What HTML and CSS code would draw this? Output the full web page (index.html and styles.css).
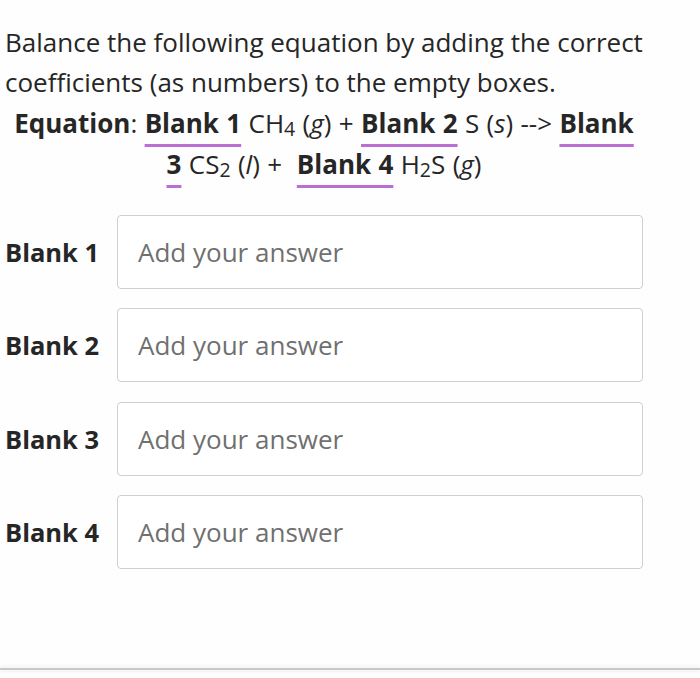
FILE: index.html
```html
<!DOCTYPE html>
<html>
<head>
<meta charset="utf-8">
<link rel="stylesheet" href="styles.css">
</head>
<body>
<div class="page">
  <div class="question">
    <p class="intro">Balance the following equation by adding the correct coefficients (as numbers) to the empty boxes.</p>
    <p class="equation"><b>Equation</b>: <span class="blank">Blank 1</span> CH<sub>4</sub> (<i>g</i>) + <span class="blank">Blank 2</span> S (<i>s</i>) --&gt; <span class="blank">Blank</span> <span class="blank">3</span> CS<sub>2</sub> (<i>l</i>) +&nbsp; <span class="blank">Blank 4</span> H<sub>2</sub>S (<i>g</i>)</p>
  </div>
  <div class="answers">
    <div class="row"><span class="label">Blank 1</span><input class="field" type="text" placeholder="Add your answer"></div>
    <div class="row"><span class="label">Blank 2</span><input class="field" type="text" placeholder="Add your answer"></div>
    <div class="row"><span class="label">Blank 3</span><input class="field" type="text" placeholder="Add your answer"></div>
    <div class="row"><span class="label">Blank 4</span><input class="field" type="text" placeholder="Add your answer"></div>
  </div>
</div>
<div class="footer-line"></div>
</body>
</html>
```
FILE: styles.css
```css
html, body {
  margin: 0;
  padding: 0;
  background: #fefefe;
}
body {
  font-family: "Open Sans", "Liberation Sans", sans-serif;
  color: #262626;
  width: 700px;
  height: 678px;
  overflow: hidden;
  position: relative;
}
.page {
  padding: 22px 0 0 5px;
  width: 638px;
}
.question {
  font-size: 26px;
  line-height: 40px;
}
.intro {
  margin: 0;
}
.equation {
  margin: 1px auto 0;
  width: 626px;
  text-align: center;
  line-height: 41px;
  word-spacing: 0.6px;
}
.equation b {
  font-weight: 700;
}
.blank {
  font-weight: 700;
  text-decoration: underline;
  text-decoration-color: #bb6fd3;
  text-decoration-thickness: 3px;
  text-underline-offset: 11px;
}
.equation sub {
  font-size: 0.75em;
  vertical-align: -3px;
  line-height: 0;
}
.answers {
  margin-top: 30px;
  display: flex;
  flex-direction: column;
  gap: 19.3px;
}
.row {
  display: flex;
  align-items: center;
}
.label {
  width: 112px;
  font-size: 25.5px;
  font-weight: 700;
}
.field {
  width: 526px;
  height: 74px;
  box-sizing: border-box;
  border: 1.5px solid #cfcfcf;
  border-radius: 4px;
  background: #fff;
  padding: 0 20px;
  font-family: "Open Sans", "Liberation Sans", sans-serif;
  font-size: 26px;
  color: #333;
}
.field::placeholder {
  color: #707070;
}
.footer-line {
  position: absolute;
  left: 0;
  right: 0;
  top: 668px;
  height: 2px;
  background: #c8c8c8;
  box-shadow: 0 -2px 3px #f0f0f0, 0 2px 3px #eeeeee;
}
```
